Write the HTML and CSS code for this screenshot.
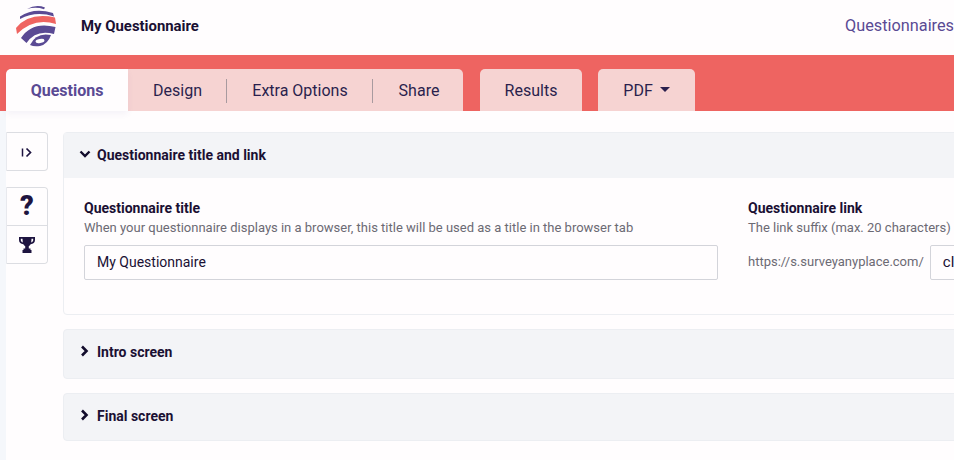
FILE: index.html
```html
<!DOCTYPE html>
<html lang="en">
<head>
  <meta charset="UTF-8">
  <meta name="viewport" content="width=device-width, initial-scale=1.0">
  <title>My Questionnaire</title>
  <link rel="stylesheet" href="styles.css">
</head>
<body>

  <div class="top-bar">
    <svg class="logo" width="44" height="44" viewBox="0 0 44 44">
      <path d="M13 5Q22 0 31 3.500L30 5.200Q22 2.500 13 5z" fill="#5a4a94"></path>
      <path d="M6 12.500Q20 3 39 9L40 12.500Q22 6.500 6 15z" fill="#5a4a94"></path>
      <path d="M2 24Q15 8 41 13.500L42 20Q20 13 3 30z" fill="#ef6461"></path>
      <path d="M7 34Q18 17 41.500 23L40 30Q22 25 12.500 39z" fill="#5a4a94"></path>
      <path d="M16 41Q22 28 37 31Q34 40 26 42Q20 43 16 41z" fill="#5a4a94"></path>
      <ellipse cx="26" cy="37" rx="4.500" ry="2" fill="#fff" transform="rotate(-10 26 37)"></ellipse>
    </svg>
    <span class="app-title">My Questionnaire</span>
    <a class="top-link">Questionnaires</a>
  </div>

  <div class="tab-band">
    <div class="tab tab-active">Questions</div>
    <div class="tab-group">
      <div class="tab tab-design">Design</div>
      <div class="tab tab-extra">Extra Options</div>
      <div class="tab tab-share">Share</div>
    </div>
    <div class="tab tab-results">Results</div>
    <div class="tab tab-pdf">PDF <span class="caret"></span></div>
  </div>

  <div class="page">
    <div class="side-tools">
      <button class="tool tool-single">
        <svg width="12" height="11" viewBox="0 0 12 11" fill="none" stroke="#1e1440">
          <path d="M1.500 1.500v8" stroke-width="1.500"></path>
          <path d="M5.500 1.500l4 4-4 4" stroke-width="1.700"></path>
        </svg>
      </button>
      <div class="tool-stack">
        <button class="tool tool-help">?</button>
        <button class="tool">
          <svg width="16" height="17" viewBox="0 0 16 17" fill="#1e1440">
            <path d="M0 1h16v3c0 2.500-1.800 4-4.400 4.300-.5.900-1.100 1.500-1.800 1.800V12.500h1.700V14H4.500v-1.500h1.700V10.100c-.7-.3-1.300-.9-1.800-1.800C1.800 8 0 6.500 0 4zM1.800 2.800V4c0 1.200.7 2 2 2.400-.1-1-.2-2.300-.3-3.600zm12.400 0h-1.700c-.1 1.300-.2 2.600-.3 3.600 1.300-.4 2-1.200 2-2.400z"></path>
            <path d="M3.500 14h9v3h-9z"></path>
          </svg>
        </button>
      </div>
    </div>

    <div class="panels">
      <div class="panel">
        <div class="panel-head panel-head-open">
          <svg class="chevron" width="12" height="9" viewBox="0 0 12 9" fill="none" stroke="#120c2c" stroke-width="2.400"><path d="M1.500 1.500L6 6l4.500-4.500"></path></svg>
          Questionnaire title and link
        </div>
        <div class="panel-body">
          <div class="field field-title">
            <label>Questionnaire title</label>
            <p class="hint">When your questionnaire displays in a browser, this title will be used as a title in the browser tab</p>
            <div class="text-input">My Questionnaire</div>
          </div>
          <div class="field field-link">
            <label>Questionnaire link</label>
            <p class="hint">The link suffix (max. 20 characters)</p>
            <div class="link-row">
              <span class="link-prefix">https://s.surveyanyplace.com/</span>
              <div class="text-input link-input">cl</div>
            </div>
          </div>
        </div>
      </div>

      <div class="panel panel-closed panel-intro">
        <div class="panel-head">
          <svg class="chevron" width="9" height="12" viewBox="0 0 9 12" fill="none" stroke="#120c2c" stroke-width="2.600"><path d="M2 1.500L6.500 6 2 10.500"></path></svg>
          Intro screen
        </div>
      </div>

      <div class="panel panel-closed panel-final">
        <div class="panel-head">
          <svg class="chevron" width="9" height="12" viewBox="0 0 9 12" fill="none" stroke="#120c2c" stroke-width="2.600"><path d="M2 1.500L6.500 6 2 10.500"></path></svg>
          Final screen
        </div>
      </div>
    </div>
  </div>

</body>
</html>
```

FILE: styles.css
```css
* { margin: 0; padding: 0; box-sizing: border-box; }
html, body { height: 100%; }
body { font-family: 'Roboto', sans-serif; background: #fffdfe; color: #1e1440; overflow: hidden; width: 954px; }

/* Top bar */
.top-bar { height: 55px; display: flex; align-items: center; padding-left: 14px; white-space: nowrap; background: #fffdfe; }
.logo { flex: none; margin-top: -3px; }
.app-title { margin-left: 23px; margin-top: -3px; font-size: 14.9px; font-weight: 700; color: #1a1033; }
.top-link { margin-left: auto; margin-top: -5px; font-size: 16.3px; color: #5a4a94; }

/* Tabs */
.tab-band { height: 56px; background: #ee6461; display: flex; align-items: flex-end; padding-left: 6px; }
.tab { height: 42px; display: flex; align-items: center; justify-content: center; font-size: 16px; color: #2a1f4d; white-space: nowrap; }
.tab-active { width: 122px; background: #fffdfe; color: #5a4a94; font-weight: 700; border-radius: 5px 0 0 0; box-shadow: 0 3px 6px rgba(90, 74, 148, 0.06); position: relative; z-index: 1; }
.tab-group { width: 335px; display: flex; align-items: center; background: #f6d3d2; border-radius: 0 5px 0 0; height: 42px; margin-right: 17px; }
.tab-design { width: 98px; padding-left: 1px; }
.tab-extra { width: 146px; padding-left: 2px; }
.tab-share { width: 91px; padding-left: 3px; }
.tab-extra, .tab-share { position: relative; }
.tab-extra::before, .tab-share::before { content: ""; position: absolute; left: 0; top: 10px; height: 24px; width: 1px; background: #a89a9f; }
.tab-results, .tab-pdf { background: #f6d3d2; border-radius: 5px 5px 0 0; }
.tab-results { width: 102px; margin-right: 16px; }
.tab-pdf { width: 97px; gap: 7px; }
.caret { width: 0; height: 0; border-left: 5px solid transparent; border-right: 5px solid transparent; border-top: 5px solid #2a1f4d; margin-top: -2px; }

/* Page under the tabs */
.page { display: flex; align-items: flex-start; padding-top: 21px; border-left: 6px solid #f5f7fb; height: 349px; }
.side-tools { flex: none; width: 42px; margin-right: 15px; }
.tool { display: flex; align-items: center; justify-content: center; width: 42px; height: 39px; background: #fffdfe; border: 1px solid #dcdde2; border-radius: 0 4px 4px 0; border-left-color: #e8e9ee; color: #1e1440; font-family: inherit; }
.tool-single { padding-top: 2px; }
.tool-stack { margin-top: 16px; border: 1px solid #dcdde2; border-left-color: #e8e9ee; border-radius: 0 4px 4px 0; background: #fffdfe; }
.tool-stack .tool { width: 100%; height: 37px; border: none; border-radius: 0 4px 0 0; }
.tool-stack .tool + .tool { height: 38px; border-top: 1px solid #dcdde2; border-radius: 0 0 4px 0; }
.tool-help { font-size: 27px; font-weight: 900; line-height: 1; }

/* Accordion panels */
.panels { flex: none; width: 1000px; }
.panel { border: 1px solid #eceef2; border-radius: 4px; }
.panel-closed { background: #f3f4f7; }
.panel-intro { margin-top: 14px; height: 50px; }
.panel-final { margin-top: 14px; height: 48px; }
.panel-head { display: flex; align-items: center; height: 45px; padding: 0 0 2px 15px; font-size: 14px; font-weight: 700; color: #1a1033; }
.panel-head-open { background: #f3f4f7; }
.panel-closed .panel-head { height: 44px; padding-bottom: 0; }
.chevron { flex: none; margin-right: 6px; }
.panel-closed .chevron { margin: -2px 8px 0 1px; }
.panel-body { display: flex; height: 136px; padding: 22px 20px 0; }

/* Form fields */
.field label { display: block; font-size: 14px; font-weight: 700; line-height: 16px; color: #1a1033; }
.hint { margin-top: 4px; font-size: 13px; line-height: 15px; color: #6c6a74; white-space: nowrap; }
.field-title { width: 634px; margin-right: 30px; }
.text-input { height: 35px; margin-top: 10px; display: flex; align-items: center; padding: 0 0 1px 12px; border: 1px solid #d3d4da; border-radius: 2px; background: #fffdfe; font-size: 14px; color: #1a1033; }
.link-row { display: flex; align-items: center; margin-top: 10px; }
.link-prefix { margin-top: -2px; font-size: 13px; color: #6c6a74; white-space: nowrap; }
.link-input { margin: 0 0 0 6px; width: 100px; font-size: 15px; }
```
